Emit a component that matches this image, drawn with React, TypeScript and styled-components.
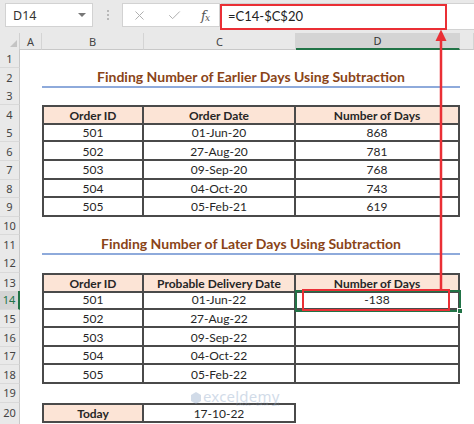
import React from 'react';
import styled, { createGlobalStyle } from 'styled-components';
import { X, Check } from 'lucide-react';

const GlobalStyle = createGlobalStyle`
  html, body { margin: 0; padding: 0; background: #fff; }
  body { overflow: hidden; }
  * { box-sizing: border-box; }
`;

const COLS = '20px 22px 102px 152px 164px 1fr';

const Frame = styled.div`
  position: relative;
  width: 474px;
  height: 424px;
  overflow: hidden;
  background: #fff;
  font-family: Lato, 'Open Sans', sans-serif;
`;

const FormulaBar = styled.div`
  height: 33px;
  display: flex;
  align-items: flex-start;
  padding: 3px 0 0 5px;
  background: #e9e9e9;
`;

const NameBox = styled.div`
  width: 88px;
  height: 24px;
  background: #fff;
  border: 1px solid #d2d2d2;
  display: flex;
  align-items: center;
  justify-content: space-between;
  padding: 0 6px 0 7px;
  font-family: 'Noto Sans', sans-serif;
  font-size: 12.5px;
  color: #333;
`;

const Caret = styled.span`
  width: 0;
  height: 0;
  border-left: 4px solid transparent;
  border-right: 4px solid transparent;
  border-top: 4px solid #777;
`;

const Dots = styled.div`
  width: 29px;
  height: 24px;
  display: flex;
  flex-direction: column;
  align-items: center;
  justify-content: center;
  gap: 2px;
`;

const Dot = styled.span`
  width: 2px;
  height: 2px;
  background: #b8b8b8;
`;

const FnBox = styled.div`
  width: 98px;
  height: 24px;
  background: #fff;
  border: 1px solid #d2d2d2;
  display: flex;
  align-items: center;
  justify-content: space-between;
  padding: 0 10px 0 9px;
  color: #b0b0b0;
`;

const Fx = styled.span`
  font-family: 'DejaVu Serif', 'Liberation Serif', serif;
  font-style: italic;
  font-size: 13px;
  color: #555;
  letter-spacing: -1px;
  sub {
    font-size: 9px;
    vertical-align: -1px;
  }
`;

const FormulaInput = styled.div`
  flex: 1;
  height: 27px;
  margin-left: 1px;
  background: #fff;
  border: 1px solid #d2d2d2;
  border-right: none;
  display: flex;
  align-items: center;
  padding: 0 0 2px 6px;
  font-size: 13px;
  color: #222;
`;

const HeaderRow = styled.div`
  display: grid;
  grid-template-columns: ${COLS};
  height: 16.4px;
  background: #e9e9e9;
`;

const Corner = styled.div`
  border-right: 1px solid #d0d0d0;
  border-bottom: 1px solid #c8c8c8;
  display: flex;
  align-items: flex-end;
  justify-content: flex-end;
  padding: 0 2px 2px 0;
`;

const CornerTri = styled.span`
  width: 0;
  height: 0;
  border-left: 7px solid transparent;
  border-bottom: 7px solid #c4c4c4;
`;

const ColHead = styled.div<{ $sel?: boolean }>`
  display: flex;
  align-items: center;
  justify-content: center;
  font-family: 'Noto Sans', sans-serif;
  font-size: 11px;
  color: ${(p) => (p.$sel ? '#333' : '#444')};
  background: ${(p) => (p.$sel ? '#d4d4d4' : 'transparent')};
  border-right: 1px solid #d4d4d4;
  border-bottom: ${(p) => (p.$sel ? '2px solid #217346' : '1px solid #c8c8c8')};
`;

const Row = styled.div`
  display: grid;
  grid-template-columns: ${COLS};
  height: 18.6px;
`;

const RowHead = styled.div<{ $sel?: boolean }>`
  display: flex;
  align-items: center;
  justify-content: center;
  font-family: 'Noto Sans', sans-serif;
  font-size: 11px;
  color: ${(p) => (p.$sel ? '#217346' : '#444')};
  background: ${(p) => (p.$sel ? '#d4d4d4' : '#e9e9e9')};
  border-bottom: 1px solid #d9d9d9;
  border-right: ${(p) => (p.$sel ? '2px solid #217346' : '1px solid #c8c8c8')};
`;

const Cell = styled.div<{
  $head?: boolean;
  $box?: boolean;
  $top?: boolean;
  $left?: boolean;
}>`
  display: flex;
  align-items: center;
  justify-content: center;
  padding-top: 1px;
  font-size: 12px;
  font-weight: ${(p) => (p.$head ? 700 : 400)};
  color: #262626;
  background: ${(p) => (p.$head ? '#fce4d6' : 'transparent')};
  border-right: ${(p) => (p.$box ? '2px solid #4a4a4a' : 'none')};
  border-bottom: ${(p) => (p.$box ? '2px solid #4a4a4a' : 'none')};
  border-top: ${(p) => (p.$box && p.$top ? '2px solid #4a4a4a' : 'none')};
  border-left: ${(p) => (p.$box && p.$left ? '2px solid #4a4a4a' : 'none')};
`;

const Title = styled.div`
  grid-column: 3 / span 3;
  display: flex;
  align-items: flex-end;
  justify-content: center;
  padding-bottom: 1px;
  font-size: 14px;
  font-weight: 700;
  color: #8a4417;
  border-bottom: 2px solid #8eaadb;
`;

const Highlight = styled.div<{ $x: number; $y: number; $w: number; $h: number }>`
  position: absolute;
  left: ${(p) => p.$x}px;
  top: ${(p) => p.$y}px;
  width: ${(p) => p.$w}px;
  height: ${(p) => p.$h}px;
  border: 2px solid #ea2f35;
  pointer-events: none;
`;

const Selection = styled.div`
  position: absolute;
  left: 295px;
  top: 290px;
  width: 166px;
  height: 21.5px;
  border: 2px solid #217346;
`;

const FillHandle = styled.span`
  position: absolute;
  right: -4px;
  bottom: -4px;
  width: 6px;
  height: 6px;
  background: #217346;
  border: 1px solid #fff;
`;

const ArrowSvg = styled.svg`
  position: absolute;
  left: 434px;
  top: 28px;
`;

const Watermark = styled.div`
  position: absolute;
  left: 191px;
  top: 389px;
  display: flex;
  align-items: center;
  gap: 2px;
  opacity: 0.4;
  color: #8fa8c8;
  pointer-events: none;
`;

const WmText = styled.div`
  display: flex;
  flex-direction: column;
  align-items: flex-end;
  line-height: 1;
`;

const WmName = styled.span`
  font-family: 'Noto Sans', sans-serif;
  font-size: 15px;
  letter-spacing: 0.2px;
`;

const WmSub = styled.span`
  font-family: 'Noto Sans', sans-serif;
  font-size: 4.5px;
  letter-spacing: 0.5px;
  margin-top: -2px;
`;

type CellDef = { v: string; head?: boolean };
type RowDef =
  | { kind: 'empty'; hideNum?: boolean }
  | { kind: 'title'; text: string }
  | { kind: 'table'; cells: CellDef[]; top?: boolean };

const rows: RowDef[] = [
  { kind: 'empty' },
  { kind: 'title', text: 'Finding Number of Earlier Days Using Subtraction' },
  { kind: 'empty' },
  {
    kind: 'table',
    top: true,
    cells: [
      { v: 'Order ID', head: true },
      { v: 'Order Date', head: true },
      { v: 'Number of Days', head: true },
    ],
  },
  { kind: 'table', cells: [{ v: '501' }, { v: '01-Jun-20' }, { v: '868' }] },
  { kind: 'table', cells: [{ v: '502' }, { v: '27-Aug-20' }, { v: '781' }] },
  { kind: 'table', cells: [{ v: '503' }, { v: '09-Sep-20' }, { v: '768' }] },
  { kind: 'table', cells: [{ v: '504' }, { v: '04-Oct-20' }, { v: '743' }] },
  { kind: 'table', cells: [{ v: '505' }, { v: '05-Feb-21' }, { v: '619' }] },
  { kind: 'empty' },
  { kind: 'title', text: 'Finding Number of Later Days Using Subtraction' },
  { kind: 'empty' },
  {
    kind: 'table',
    top: true,
    cells: [
      { v: 'Order ID', head: true },
      { v: 'Probable Delivery Date', head: true },
      { v: 'Number of Days', head: true },
    ],
  },
  { kind: 'table', cells: [{ v: '501' }, { v: '01-Jun-22' }, { v: '-138' }] },
  { kind: 'table', cells: [{ v: '502' }, { v: '27-Aug-22' }, { v: '' }] },
  { kind: 'table', cells: [{ v: '503' }, { v: '09-Sep-22' }, { v: '' }] },
  { kind: 'table', cells: [{ v: '504' }, { v: '04-Oct-22' }, { v: '' }] },
  { kind: 'table', cells: [{ v: '505' }, { v: '05-Feb-22' }, { v: '' }] },
  { kind: 'empty' },
  { kind: 'table', top: true, cells: [{ v: 'Today', head: true }, { v: '17-10-22' }] },
  { kind: 'empty', hideNum: true },
];

const columns = ['A', 'B', 'C', 'D', ''];

export default function App() {
  return (
    <>
      <GlobalStyle />
      <Frame>
        <FormulaBar>
          <NameBox>
            <span>D14</span>
            <Caret />
          </NameBox>
          <Dots>
            <Dot />
            <Dot />
            <Dot />
          </Dots>
          <FnBox>
            <X size={15} strokeWidth={1.6} />
            <Check size={15} strokeWidth={1.6} />
            <Fx>
              f<sub>x</sub>
            </Fx>
          </FnBox>
          <FormulaInput>=C14-$C$20</FormulaInput>
        </FormulaBar>

        <HeaderRow>
          <Corner>
            <CornerTri />
          </Corner>
          {columns.map((c, i) => (
            <ColHead key={i} $sel={c === 'D'}>
              {c}
            </ColHead>
          ))}
        </HeaderRow>

        {rows.map((r, i) => {
          const n = i + 1;
          const hide = r.kind === 'empty' && r.hideNum;
          return (
            <Row key={n}>
              <RowHead $sel={n === 14}>{hide ? '' : n}</RowHead>
              <Cell />
              {r.kind === 'title' && <Title>{r.text}</Title>}
              {r.kind === 'table' &&
                r.cells.map((c, j) => (
                  <Cell key={j} $box $head={c.head} $top={r.top} $left={j === 0}>
                    {c.v}
                  </Cell>
                ))}
            </Row>
          );
        })}

        <Highlight $x={220} $y={4} $w={227} $h={26} />
        <ArrowSvg width={14} height={262} viewBox="0 0 14 262">
          <line x1={7} y1={8} x2={7} y2={262} stroke="#ea2f35" strokeWidth={2.5} />
          <polygon points="1.5,13 7,1.5 12.5,13" fill="#ea2f35" />
        </ArrowSvg>
        <Selection>
          <FillHandle />
        </Selection>
        <Highlight $x={302} $y={289} $w={148} $h={22} />
        <Watermark>
          <svg width={10} height={12} viewBox="0 0 10 12">
            <path d="M5 0 L10 3 L10 9 L5 12 L0 9 L0 3 Z" fill="#8fa8c8" />
          </svg>
          <WmText>
            <WmName>exceldemy</WmName>
            <WmSub>EXCEL · DATA · BI</WmSub>
          </WmText>
        </Watermark>
      </Frame>
    </>
  );
}
